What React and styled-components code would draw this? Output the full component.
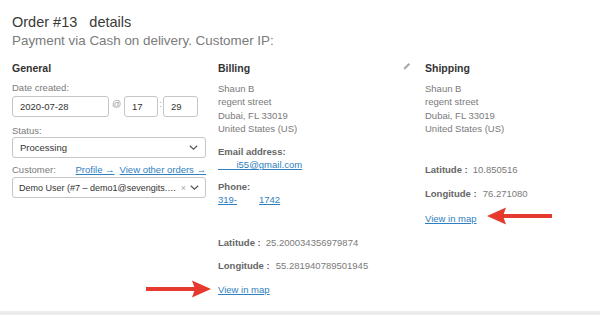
import React from "react";
import styled, { createGlobalStyle } from "styled-components";

const Global = createGlobalStyle`
  html, body { margin: 0; padding: 0; background: #ececec; }
  body { font-family: "Liberation Sans", Arial, sans-serif; }
`;

const Panel = styled.div`
  position: relative;
  width: 600px;
  height: 311px;
  box-sizing: border-box;
  background: #fff;
  padding: 13px 12px 0;
  overflow: hidden;
`;

const Title = styled.h2`
  margin: 0;
  font-size: 14.5px;
  line-height: 18px;
  font-weight: 400;
  color: #3a3a3a;
  white-space: pre;
`;

const Subtitle = styled.p`
  margin: 2px 0 0;
  font-size: 13.4px;
  line-height: 15px;
  color: #7b7b7b;
`;

const Columns = styled.div`
  display: grid;
  grid-template-columns: 194px 195px 1fr;
  column-gap: 12px;
  margin-top: 13px;
`;

const Column = styled.div`
  display: flex;
  flex-direction: column;
`;

const HeadingRow = styled.div`
  display: flex;
  justify-content: space-between;
  align-items: flex-start;
  height: 14px;
`;

const Heading = styled.h3`
  margin: 0;
  font-size: 10.5px;
  line-height: 14px;
  font-weight: 700;
  color: #333;
`;

const Pencil = styled.svg`
  width: 8px;
  height: 8px;
  margin: 1px 2px 0 0;
`;

const Label = styled.div`
  margin-top: ${(p) => p.$mt || 0}px;
  font-size: 9.5px;
  line-height: 13px;
  color: #7a7a7a;
`;

const LabelRow = styled.div`
  margin-top: ${(p) => p.$mt || 0}px;
  display: flex;
  justify-content: space-between;
  font-size: 9.5px;
  line-height: 13px;
  color: #7a7a7a;
`;

const LinkGroup = styled.div`
  display: flex;
  gap: 5px;
`;

const Link = styled.a`
  color: #2f7fc1;
  text-decoration: underline;
  font-size: 9.5px;
  line-height: 13px;
  white-space: pre;
  margin-left: ${(p) => p.$ml || 0}px;
`;

const DateRow = styled.div`
  margin-top: ${(p) => p.$mt || 0}px;
  display: flex;
  align-items: center;
`;

const Field = styled.div`
  box-sizing: border-box;
  width: ${(p) => p.$w}px;
  height: 21px;
  border: 1px solid #c6c6c6;
  border-radius: 3px;
  background: #fff;
  display: flex;
  align-items: center;
  padding: 0 ${(p) => p.$pad || 7}px;
  font-size: 9.5px;
  color: #333;
  margin-top: ${(p) => p.$mt || 0}px;
  white-space: nowrap;
  overflow: hidden;
`;

const Sep = styled.span`
  width: ${(p) => p.$w}px;
  text-align: center;
  font-size: 9px;
  color: #999;
  align-self: flex-start;
  margin-top: 3px;
`;

const SelectText = styled.span`
  flex: 1;
  min-width: 0;
  overflow: hidden;
  text-overflow: ellipsis;
  white-space: nowrap;
  font-size: ${(p) => p.$fs || 9.5}px;
`;

const Clear = styled.span`
  font-size: 9px;
  color: #aaa;
  margin: 0 4px 0 3px;
`;

const Chevron = styled.svg`
  width: 9px;
  height: 5px;
  flex: none;
`;

const Address = styled.div`
  margin-top: 7px;
  font-size: 9.5px;
  line-height: 13.33px;
  color: #7a7a7a;
`;

const Strong = styled.div`
  margin-top: ${(p) => p.$mt || 0}px;
  font-size: 9.5px;
  line-height: 13px;
  font-weight: 700;
  color: #666;
`;

const LinkLine = styled.div`
  display: flex;
  line-height: 13px;
  height: 13px;
`;

const Coord = styled.div`
  margin-top: ${(p) => p.$mt || 0}px;
  font-size: 9.5px;
  line-height: 13px;
  color: #7a7a7a;
  display: flex;
`;

const CoordLabel = styled.span`
  font-weight: 700;
  color: #666;
  margin-right: ${(p) => p.$gap || 5}px;
`;

const Block = styled.div`
  margin-top: ${(p) => p.$mt || 0}px;
  line-height: 13px;
  height: 13px;
`;

const Arrow = styled.svg`
  position: absolute;
  left: ${(p) => p.$x}px;
  top: ${(p) => p.$y}px;
  width: 67px;
  height: 18px;
`;

const ChevronIcon = () => (
  <Chevron viewBox="0 0 9 5">
    <path d="M0.8 0.8 L4.5 4.2 L8.2 0.8" fill="none" stroke="#555" strokeWidth="1.2" />
  </Chevron>
);

export default function App() {
  return (
    <>
      <Global />
      <Panel>
        <Title>{"Order #13   details"}</Title>
        <Subtitle>Payment via Cash on delivery. Customer IP:</Subtitle>
        <Columns>
          <Column>
            <HeadingRow>
              <Heading>General</Heading>
            </HeadingRow>
            <Label $mt={6}>Date created:</Label>
            <DateRow $mt={2}>
              <Field $w={97}>2020-07-28</Field>
              <Sep $w={15}>@</Sep>
              <Field $w={34}>17</Field>
              <Sep $w={5}>:</Sep>
              <Field $w={35}>29</Field>
            </DateRow>
            <Label $mt={7}>Status:</Label>
            <Field $w={194} $pad={7}>
              <SelectText>Processing</SelectText>
              <ChevronIcon />
            </Field>
            <LabelRow $mt={5}>
              <span>Customer:</span>
              <LinkGroup>
                <Link href="#">Profile →</Link>
                <Link href="#">View other orders →</Link>
              </LinkGroup>
            </LabelRow>
            <Field $w={194} $mt={1} $pad={6}>
              <SelectText $fs={9}>Demo User (#7 – demo1@sevengits.c...</SelectText>
              <Clear>×</Clear>
              <ChevronIcon />
            </Field>
          </Column>

          <Column>
            <HeadingRow>
              <Heading>Billing</Heading>
              <Pencil viewBox="0 0 8 8">
                <path d="M0.6 7.4 L1.1 5.4 L5.6 0.9 L7.1 2.4 L2.6 6.9 Z" fill="#a8a8a8" />
              </Pencil>
            </HeadingRow>
            <Address>
              Shaun B
              <br />
              regent street
              <br />
              Dubai, FL 33019
              <br />
              United States (US)
            </Address>
            <Strong $mt={10}>Email address:</Strong>
            <LinkLine>
              <Link href="#">{"\u00a0\u00a0\u00a0\u00a0\u00a0\u00a0\u00a0i55@gmail.com"}</Link>
            </LinkLine>
            <Strong $mt={9}>Phone:</Strong>
            <LinkLine>
              <Link href="#">319-</Link>
              <Link href="#" $ml={22}>1742</Link>
            </LinkLine>
            <Coord $mt={30}>
              <CoordLabel $gap={5}>Latitude :</CoordLabel>
              25.200034356979874
            </Coord>
            <Coord $mt={10}>
              <CoordLabel $gap={6}>Longitude :</CoordLabel>
              55.281940789501945
            </Coord>
            <Block $mt={9}>
              <Link href="#">View in map</Link>
            </Block>
          </Column>

          <Column>
            <HeadingRow>
              <Heading>Shipping</Heading>
            </HeadingRow>
            <Address>
              Shaun B
              <br />
              regent street
              <br />
              Dubai, FL 33019
              <br />
              United States (US)
            </Address>
            <Coord $mt={28}>
              <CoordLabel $gap={5}>Latitude :</CoordLabel>
              10.850516
            </Coord>
            <Coord $mt={11}>
              <CoordLabel $gap={6}>Longitude :</CoordLabel>
              76.271080
            </Coord>
            <Block $mt={10}>
              <Link href="#">View in map</Link>
            </Block>
          </Column>
        </Columns>

        <Arrow $x={145} $y={280} viewBox="0 0 67 18">
          <rect x="1" y="7" width="49" height="4" fill="#e63a2e" />
          <polygon points="47,0.5 66,9 47,17.5 50,9" fill="#e63a2e" />
        </Arrow>
        <Arrow $x={486} $y={207} viewBox="0 0 67 18">
          <rect x="17" y="7" width="49" height="4" fill="#e63a2e" />
          <polygon points="20,0.5 1,9 20,17.5 17,9" fill="#e63a2e" />
        </Arrow>
      </Panel>
    </>
  );
}
